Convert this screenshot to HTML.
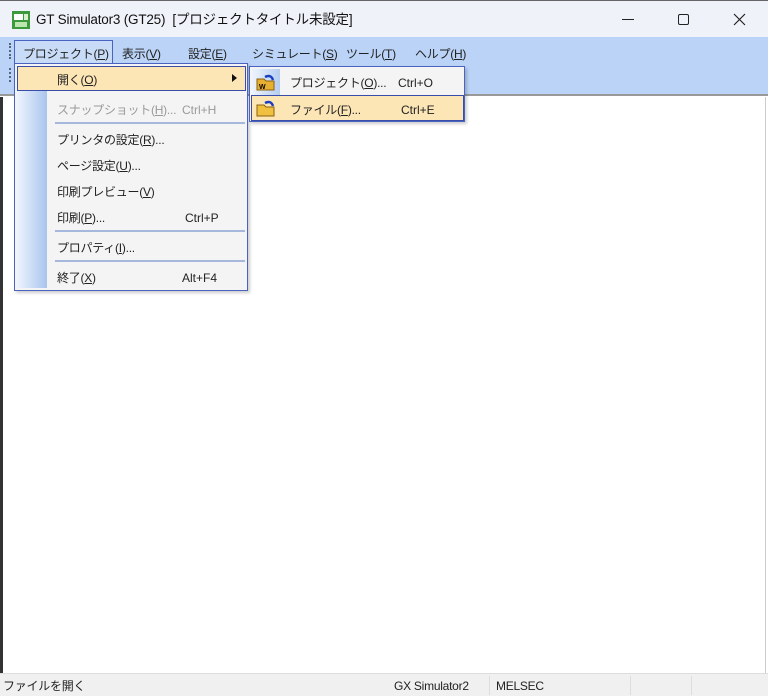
<!DOCTYPE html>
<html><head><meta charset="utf-8"><style>
*{margin:0;padding:0;box-sizing:border-box}
body{width:768px;height:696px;overflow:hidden;background:#fff;font-family:"Liberation Sans","Noto Sans CJK JP",sans-serif;font-size:12px;letter-spacing:-0.25px;line-height:22px;color:#222;position:relative}
.abs{position:absolute;white-space:nowrap}
u{text-decoration:underline}
.title{left:0;top:0;width:768px;height:37px;background:#eff2f9;border-top:1px solid #666;line-height:16px}
.menubar{left:0;top:37px;width:768px;height:27px;background:#bad3f6}
.toolbar{left:0;top:64px;width:768px;height:32px;background:#bad3f6;border-bottom:2px solid #999}
.mi{top:43px}
.status{left:0;top:673px;width:768px;height:23px;background:#f0f0f0;border-top:1px solid #ddd}
.menu{left:14px;top:63px;width:234px;height:228px;background:#f4f4f4;border:1px solid #4a62c0;box-shadow:2px 2px 3px rgba(0,0,0,.2)}
.strip{left:2px;top:2px;width:30px;height:222px;background:linear-gradient(90deg,#eef4fd,#a9c5ee)}
.it{left:42px}
.sep{left:40px;width:190px;height:2px;background:#a6b9dd}
.sub{left:249px;top:66px;width:216px;height:56px;background:#f4f4f4;border:1px solid #4a62c0;box-shadow:2px 2px 3px rgba(0,0,0,.2)}
.hl{background:#fde6b6;border:1px solid #3a4da8}
.k{letter-spacing:0}
</style></head><body>
<div class="abs title">
 <svg class="abs" style="left:12px;top:10px" width="18" height="18"><rect x="0" y="0" width="18" height="18" fill="#3c9a3c"/><rect x="2" y="3" width="9" height="6" fill="#fff"/><rect x="3" y="11" width="12" height="5" fill="#bde6b0"/><rect x="12" y="3" width="4" height="6" fill="#d8f0d0"/></svg>
 <div class="abs" style="left:36px;top:11px;font-size:13.5px;letter-spacing:-0.2px;color:#111">GT Simulator3 (GT25)&nbsp; [プロジェクトタイトル未設定]</div>
 <div class="abs" style="left:622px;top:18px;width:12px;height:1px;background:#222"></div>
 <div class="abs" style="left:678px;top:13px;width:11px;height:11px;border:1px solid #222;border-radius:2px"></div>
 <svg class="abs" style="left:733px;top:12px" width="13" height="13"><path d="M1 1L12 12M12 1L1 12" stroke="#222" stroke-width="1.2"/></svg>
</div>
<div class="abs menubar">
 <div class="abs" style="left:9px;top:6px;width:2px;height:16px;border-left:2px dotted #55657f"></div>
</div>
<div class="abs toolbar"><div class="abs" style="left:9px;top:4px;width:2px;height:14px;border-left:2px dotted #55657f"></div></div>
<div class="abs" style="left:14px;top:40px;width:99px;height:24px;background:#c8dcf7;border:1px solid #4a62c0;border-bottom:none"></div>
<div class="abs mi" style="left:23px">プロジェクト(<u>P</u>)</div>
<div class="abs mi" style="left:122px">表示(<u>V</u>)</div>
<div class="abs mi" style="left:188px">設定(<u>E</u>)</div>
<div class="abs mi" style="left:252px">シミュレート(<u>S</u>)</div>
<div class="abs mi" style="left:346px">ツール(<u>T</u>)</div>
<div class="abs mi" style="left:415px">ヘルプ(<u>H</u>)</div>
<div class="abs" style="left:0;top:97px;width:3px;height:576px;background:#333"></div>
<div class="abs" style="left:765px;top:97px;width:1px;height:576px;background:#ccc"></div>

<div class="abs menu">
 <div class="abs strip"></div>
 <div class="abs hl" style="left:2px;top:2px;width:229px;height:25px"></div>
 <div class="abs it" style="top:5px">開く(<u>O</u>)</div>
 <div class="abs" style="left:217px;top:10px;width:0;height:0;border-left:5px solid #111;border-top:4px solid transparent;border-bottom:4px solid transparent"></div>
 <div class="abs it" style="top:35px;color:#9a9a9a">スナップショット(<u>H</u>)...</div>
 <div class="abs k" style="left:167px;top:35px;color:#9a9a9a">Ctrl+H</div>
 <div class="abs sep" style="top:58px"></div>
 <div class="abs it" style="top:65px">プリンタの設定(<u>R</u>)...</div>
 <div class="abs it" style="top:91px">ページ設定(<u>U</u>)...</div>
 <div class="abs it" style="top:117px">印刷プレビュー(<u>V</u>)</div>
 <div class="abs it" style="top:143px">印刷(<u>P</u>)...</div>
 <div class="abs k" style="left:170px;top:143px">Ctrl+P</div>
 <div class="abs sep" style="top:166px"></div>
 <div class="abs it" style="top:173px">プロパティ(<u>I</u>)...</div>
 <div class="abs sep" style="top:196px"></div>
 <div class="abs it" style="top:203px">終了(<u>X</u>)</div>
 <div class="abs k" style="left:167px;top:203px">Alt+F4</div>
</div>

<div class="abs sub">
 <div class="abs" style="left:2px;top:2px;width:28px;height:50px;background:linear-gradient(90deg,#eef4fd,#b5cdf0)"></div>
 <svg class="abs" style="left:6px;top:6px" width="20" height="18"><path d="M1 6h7l2 2h8v9H1z" fill="#e8b030" stroke="#8a6010"/><text x="3" y="16" font-size="7" font-weight="bold" font-family="Liberation Sans">W</text><path d="M9 4q6-3 8 3" stroke="#1a3fc0" stroke-width="2.5" fill="none"/></svg>
 <div class="abs" style="left:40px;top:5px">プロジェクト(<u>O</u>)...</div>
 <div class="abs k" style="left:148px;top:5px">Ctrl+O</div>
 <div class="abs hl" style="left:1px;top:28px;width:213px;height:26px"></div>
 <svg class="abs" style="left:6px;top:32px" width="20" height="18"><path d="M1 6h7l2 2h8v9H1z" fill="#f0c040" stroke="#8a6010"/><path d="M9 4q6-3 8 3" stroke="#1a3fc0" stroke-width="2.5" fill="none"/></svg>
 <div class="abs" style="left:40px;top:32px">ファイル(<u>F</u>)...</div>
 <div class="abs k" style="left:151px;top:32px">Ctrl+E</div>
</div>

<div class="abs status">
 <div class="abs" style="left:3px;top:1px">ファイルを開く</div>
 <div class="abs" style="left:394px;top:1px">GX Simulator2</div>
 <div class="abs" style="left:489px;top:2px;width:1px;height:19px;background:#ddd"></div>
 <div class="abs" style="left:496px;top:1px">MELSEC</div>
 <div class="abs" style="left:630px;top:2px;width:1px;height:19px;background:#ddd"></div>
 <div class="abs" style="left:691px;top:2px;width:1px;height:19px;background:#ddd"></div>
</div>
</body></html>
